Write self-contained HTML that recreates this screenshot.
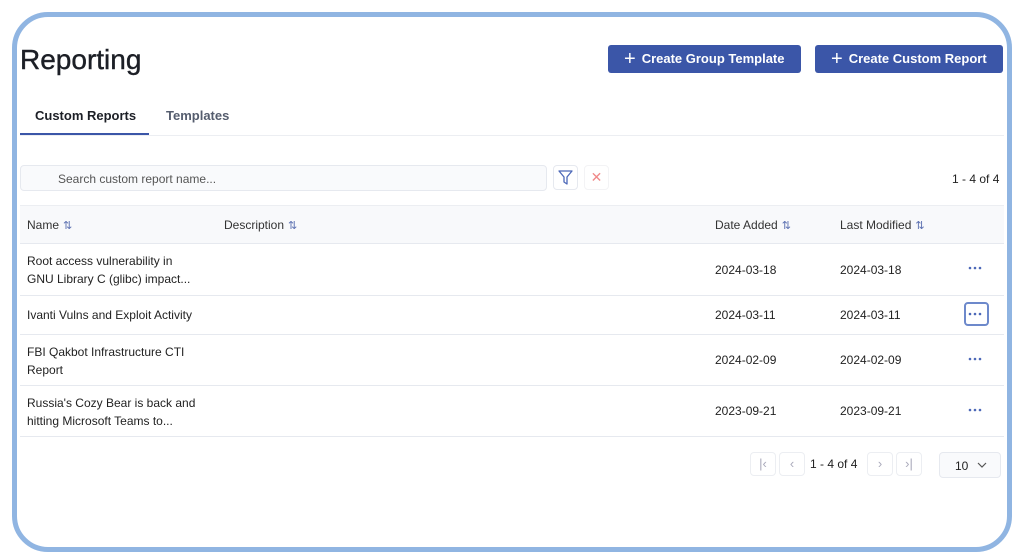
<!DOCTYPE html>
<html><head><style>
*{box-sizing:border-box;margin:0;padding:0}
body{width:1024px;height:560px;background:#fff;font-family:"Liberation Sans",sans-serif;position:relative;overflow:hidden;color:#1f2329}
.frame{position:absolute;left:12px;top:12px;width:1000px;height:540px;border:5px solid #90b5e2;border-radius:36px}
.abs{position:absolute}
.btn{position:absolute;top:45px;height:28px;background:#3b56a8;color:#fff;border-radius:3px;font-size:13px;font-weight:bold;line-height:28px;padding-left:16px}
.btn i{font-style:normal;font-weight:normal;font-size:20px;vertical-align:-2px;margin-right:6px}
.th{position:absolute;top:218px;font-size:12px;color:#333;}
.th span{color:#5a6fb0;font-size:11px;margin-left:4px}
.row{position:absolute;left:20px;width:984px;border-bottom:1px solid #e6e9ef}
.c{position:absolute;font-size:12px;color:#222;line-height:18px}
.dots{position:absolute;left:967px}
.pg{position:absolute;top:452px;height:24px;width:26px;border:1px solid #eceef2;border-radius:4px;color:#aab;font-size:13px;text-align:center;line-height:22px}
</style></head><body>
<div class="frame"></div>
<div class="abs" style="left:20px;top:44px;font-size:28px;color:#1c1f26;-webkit-text-stroke:0.4px #1c1f26">Reporting</div>
<div class="btn" style="left:608px;width:193px"><i>+</i>Create Group Template</div>
<div class="btn" style="left:815px;width:188px"><i>+</i>Create Custom Report</div>
<div class="abs" style="left:35px;top:108px;font-size:13px;font-weight:bold;color:#1c1f26">Custom Reports</div>
<div class="abs" style="left:166px;top:108px;font-size:13px;font-weight:bold;color:#555d6e">Templates</div>
<div class="abs" style="left:20px;top:133px;width:129px;height:3px;background:#3b56a8"></div>
<div class="abs" style="left:20px;top:135px;width:984px;height:1px;background:#eceef2"></div>
<div class="abs" style="left:20px;top:165px;width:527px;height:26px;border:1px solid #e6e9ef;border-radius:4px;background:#f9fafc;font-size:12px;color:#555;padding:6px 0 0 37px">Search custom report name...</div>
<div class="abs" style="left:553px;top:165px;width:25px;height:25px;border:1px solid #e6e9ef;border-radius:4px"><svg width="23" height="23" viewBox="0 0 23 23"><path d="M5 5h13l-5 6v7l-3-2v-5z" fill="none" stroke="#4c68b8" stroke-width="1.3" stroke-linejoin="round"/></svg></div>
<div class="abs" style="left:584px;top:165px;width:25px;height:25px;border:1px solid #f3f3f5;border-radius:4px;color:#f08a8a;font-size:14px;text-align:center;line-height:23px">✕</div>
<div class="abs" style="left:952px;top:172px;font-size:12px;color:#222">1 - 4 of 4</div>
<div class="abs" style="left:20px;top:205px;width:984px;height:39px;background:#f8f9fb;border-top:1px solid #eceef2;border-bottom:1px solid #e6e9ef"></div>
<div class="th" style="left:27px">Name<span>⇅</span></div>
<div class="th" style="left:224px">Description<span>⇅</span></div>
<div class="th" style="left:715px">Date Added<span>⇅</span></div>
<div class="th" style="left:840px">Last Modified<span>⇅</span></div>
<div class="row" style="top:244px;height:52px"></div>
<div class="c" style="left:27px;top:252px">Root access vulnerability in<br>GNU Library C (glibc) impact...</div>
<div class="c" style="left:715px;top:261px">2024-03-18</div><div class="c" style="left:840px;top:261px">2024-03-18</div>
<svg class="dots" style="top:266px" width="16" height="4"><circle cx="3" cy="2" r="1.3" fill="#4c68b8"/><circle cx="8" cy="2" r="1.3" fill="#4c68b8"/><circle cx="13" cy="2" r="1.3" fill="#4c68b8"/></svg>
<div class="row" style="top:296px;height:39px"></div>
<div class="c" style="left:27px;top:306px">Ivanti Vulns and Exploit Activity</div>
<div class="c" style="left:715px;top:306px">2024-03-11</div><div class="c" style="left:840px;top:306px">2024-03-11</div>
<div class="abs" style="left:964px;top:302px;width:25px;height:24px;border:2px solid #6d89cb;border-radius:4px"></div>
<svg class="dots" style="top:312px" width="16" height="4"><circle cx="3" cy="2" r="1.3" fill="#4c68b8"/><circle cx="8" cy="2" r="1.3" fill="#4c68b8"/><circle cx="13" cy="2" r="1.3" fill="#4c68b8"/></svg>
<div class="row" style="top:335px;height:51px"></div>
<div class="c" style="left:27px;top:343px">FBI Qakbot Infrastructure CTI<br>Report</div>
<div class="c" style="left:715px;top:351px">2024-02-09</div><div class="c" style="left:840px;top:351px">2024-02-09</div>
<svg class="dots" style="top:357px" width="16" height="4"><circle cx="3" cy="2" r="1.3" fill="#4c68b8"/><circle cx="8" cy="2" r="1.3" fill="#4c68b8"/><circle cx="13" cy="2" r="1.3" fill="#4c68b8"/></svg>
<div class="row" style="top:386px;height:51px"></div>
<div class="c" style="left:27px;top:394px">Russia's Cozy Bear is back and<br>hitting Microsoft Teams to...</div>
<div class="c" style="left:715px;top:402px">2023-09-21</div><div class="c" style="left:840px;top:402px">2023-09-21</div>
<svg class="dots" style="top:408px" width="16" height="4"><circle cx="3" cy="2" r="1.3" fill="#4c68b8"/><circle cx="8" cy="2" r="1.3" fill="#4c68b8"/><circle cx="13" cy="2" r="1.3" fill="#4c68b8"/></svg>
<div class="pg" style="left:750px">|‹</div>
<div class="pg" style="left:779px">‹</div>
<div class="abs" style="left:810px;top:457px;font-size:12px;color:#222">1 - 4 of 4</div>
<div class="pg" style="left:867px">›</div>
<div class="pg" style="left:896px">›|</div>
<div class="abs" style="left:939px;top:452px;width:62px;height:26px;border:1px solid #e6e9ef;border-radius:4px;background:#f9fafc;font-size:12px;color:#222;padding:6px 0 0 15px">10</div>
<svg class="abs" style="left:977px;top:462px" width="10" height="6"><path d="M1 1l4 4 4-4" fill="none" stroke="#555" stroke-width="1.2"/></svg>
</body></html>
